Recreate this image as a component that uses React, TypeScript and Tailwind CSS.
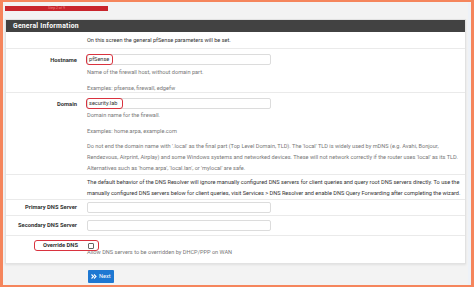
import React from 'react'

const font = { fontFamily: 'Roboto, "Liberation Sans", sans-serif' }

function Label({ children }: { children: React.ReactNode }) {
  return (
    <div className="w-[71px] shrink-0 text-right font-bold text-[5.8px] text-[#333]">{children}</div>
  )
}

function Row({ label, children, className }: { label?: React.ReactNode; children: React.ReactNode; className?: string }) {
  return (
    <div className={'flex border-t border-[#eaeaea] ' + (className ?? '')}>
      <Label>{label}</Label>
      <div className="ml-[10px] flex-1">{children}</div>
    </div>
  )
}

function Input({ value, boxWidth }: { value?: string; boxWidth?: string }) {
  return (
    <div className="relative h-[11px] w-[184px] rounded-[2px] border border-[#dcdcdc] bg-white">
      {value && (
        <span
          className={
            'absolute left-[-2px] top-[-1px] flex h-[11px] items-center rounded-[3px] border border-[#d9333f] pl-[2px] text-[5.6px] text-[#333] ' +
            (boxWidth ?? '')
          }
        >
          {value}
        </span>
      )}
    </div>
  )
}

export default function App() {
  return (
    <div
      style={font}
      className="flex h-[287px] w-[474px] border-t-2 border-b-2 border-l-[3px] border-r-[3px] border-[#f5855c] bg-[#f3f3f3]"
    >
      <div className="flex flex-1 flex-col px-[2px]">
        {/* progress */}
        <div className="mt-[4px] h-[5px] w-[103px] bg-[#c9252c] text-center text-[3.5px] leading-[5px] text-[#f08a8a]">
          Step 2 of 9
        </div>

        <div className="mt-[8px] border border-[#e2e2e2] bg-white shadow-[0_1px_2px_rgba(0,0,0,0.08)]">
          <div className="flex h-[12px] items-center bg-[#424242] px-[7px] text-[6.8px] font-bold tracking-[0.25px] text-white">
            General Information
          </div>

          <div className="flex h-[16px] items-center pl-[81px] text-[5.6px] text-[#333]">
            On this screen the general pfSense parameters will be set.
          </div>

          <Row className="h-[44px] pt-[5px]" label={<div className="mt-[2px]">Hostname</div>}>
            <Input value="pfSense" boxWidth="w-[27px]" />
            <div className="mt-[2px] text-[5.6px] leading-[11px] text-[#777]">Name of the firewall host, without domain part.</div>
            <div className="mt-[5px] text-[5.6px] leading-[11px] text-[#777]">Examples: pfsense, firewall, edgefw</div>
          </Row>

          <Row className="h-[82px] pt-[5px]" label={<div className="mt-[2px]">Domain</div>}>
            <Input value="security.lab" boxWidth="w-[37px]" />
            <div className="mt-[1px] text-[5.6px] leading-[11px] text-[#777]">Domain name for the firewall.</div>
            <div className="mt-[5px] text-[5.6px] leading-[11px] text-[#777]">Examples: home.arpa, example.com</div>
            <div className="mt-[4px] whitespace-nowrap text-[5.6px] leading-[11px] text-[#777]">
              Do not end the domain name with '.local' as the final part (Top Level Domain, TLD). The 'local' TLD is widely used by mDNS (e.g. Avahi, Bonjour,
              <br />
              Rendezvous, Airprint, Airplay) and some Windows systems and networked devices. These will not network correctly if the router uses 'local' as its TLD.
              <br />
              Alternatives such as 'home.arpa', 'local.lan', or 'mylocal' are safe.
            </div>
          </Row>

          <Row className="h-[25px] pt-[2px]">
            <div className="whitespace-nowrap text-[5.6px] leading-[11px] text-[#333]">
              The default behavior of the DNS Resolver will ignore manually configured DNS servers for client queries and query root DNS servers directly. To use the
              <br />
              manually configured DNS servers below for client queries, visit Services &gt; DNS Resolver and enable DNS Query Forwarding after completing the wizard.
            </div>
          </Row>

          <Row className="h-[16px] items-center" label="Primary DNS Server">
            <Input />
          </Row>

          <Row className="h-[20px] items-center" label="Secondary DNS Server">
            <Input />
          </Row>

          <div className="flex h-[29px] border-t border-[#eaeaea] pt-[4px]">
            <div className="relative ml-[28px] flex h-[11px] w-[65px] items-center rounded-[3px] border border-[#d9333f]">
              <span className="w-[43px] text-right text-[5.8px] font-bold text-[#333]">Override DNS</span>
              <span className="ml-[10px] h-[6px] w-[6px] rounded-[1px] border border-[#666] bg-white" />
            </div>
          </div>
          <div className="-mt-[17px] mb-[5px] pl-[81px] text-[5.6px] leading-[11px] text-[#777]">
            Allow DNS servers to be overridden by DHCP/PPP on WAN
          </div>
        </div>

        <div className="mt-[6px] flex pl-[83px]">
          <div className="flex h-[13px] items-center gap-[2px] rounded-[1px] bg-[#1e78d2] px-[3px] text-[5.6px] text-white">
            <svg width="6" height="5" viewBox="0 0 12 10" fill="none" stroke="white" strokeWidth="2.2">
              <path d="M1 1l4 4-4 4M6 1l4 4-4 4" />
            </svg>
            Next
          </div>
        </div>
      </div>
      <div className="w-[3px] bg-[#eef2f8]" />
    </div>
  )
}
